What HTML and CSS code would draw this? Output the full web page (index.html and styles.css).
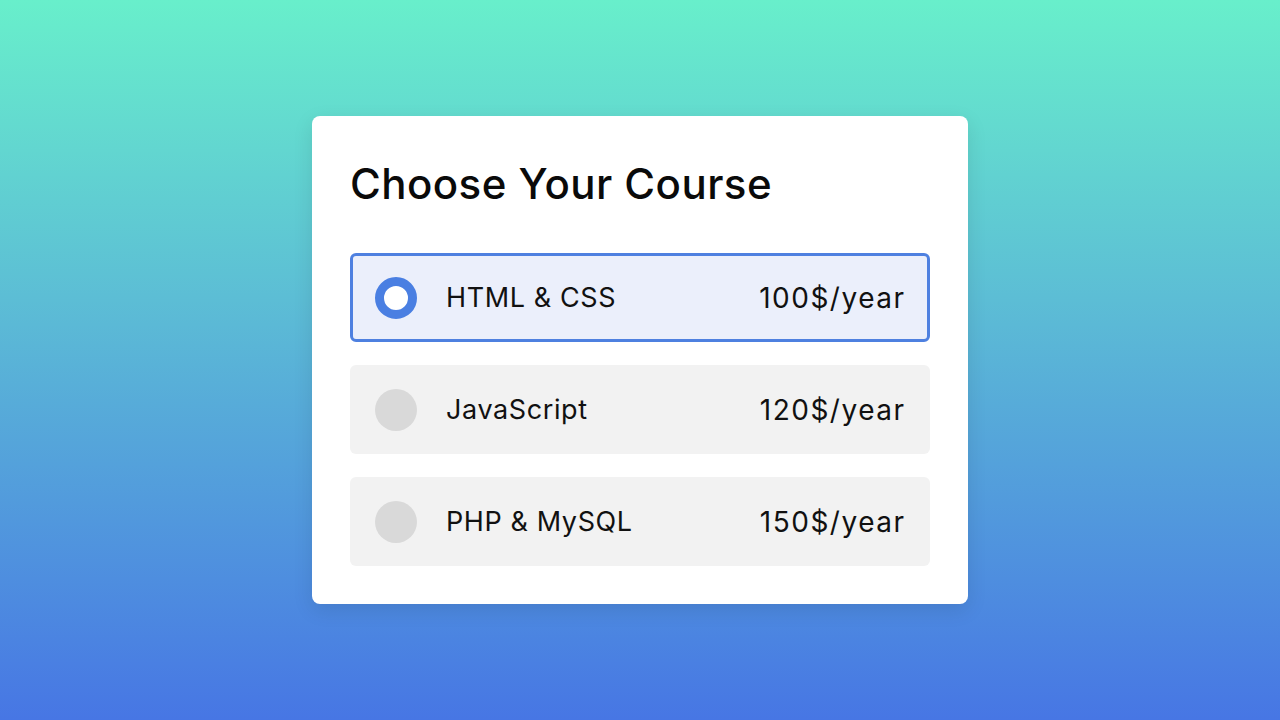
FILE: index.html
```html
<!DOCTYPE html>
<html>
<head>
<meta charset="utf-8">
<link rel="stylesheet" href="styles.css">
</head>
<body>
<div class="card">
  <h1 class="title">Choose Your Course</h1>
  <div class="options">
    <label class="option selected">
      <span class="radio"></span>
      <span class="name">HTML &amp; CSS</span>
      <span class="price">100$/year</span>
    </label>
    <label class="option">
      <span class="radio"></span>
      <span class="name">JavaScript</span>
      <span class="price">120$/year</span>
    </label>
    <label class="option">
      <span class="radio"></span>
      <span class="name">PHP &amp; MySQL</span>
      <span class="price">150$/year</span>
    </label>
  </div>
</div>
</body>
</html>
```
FILE: styles.css
```css
html, body {
  margin: 0;
  padding: 0;
}
body {
  width: 1280px;
  height: 720px;
  display: flex;
  align-items: center;
  justify-content: center;
  background: linear-gradient(to bottom, #68efcb 0%, #5bb9d6 45%, #4776e4 100%);
  font-family: "Inter", "Noto Sans", sans-serif;
  color: #111;
}
.card {
  width: 656px;
  height: 488px;
  box-sizing: border-box;
  padding: 38px;
  background: #fff;
  border-radius: 8px;
  box-shadow: 0 6px 20px rgba(0, 0, 0, 0.10);
}
.title {
  margin: 0 0 39px 0;
  height: 60px;
  line-height: 60px;
  font-size: 42px;
  font-weight: 500;
  letter-spacing: 0.45px;
  color: #0a0a0a;
}
.options {
  display: flex;
  flex-direction: column;
  gap: 23px;
}
.option {
  height: 89px;
  box-sizing: border-box;
  display: flex;
  align-items: center;
  padding: 0 23px 0 22px;
  background: #f2f2f2;
  border: 3px solid transparent;
  border-radius: 6px;
  font-size: 27px;
  color: #111;
}
.option.selected {
  background: #ebeffb;
  border-color: #4e80e0;
}
.radio {
  width: 42px;
  height: 42px;
  box-sizing: border-box;
  border-radius: 50%;
  background: #d9d9d9;
  flex: none;
}
.option.selected .radio {
  background: #fff;
  border: 9px solid #4a7fe2;
}
.name {
  margin-left: 29px;
  flex: 1;
  letter-spacing: 0.6px;
}
.price {
  text-align: right;
  font-size: 28px;
  letter-spacing: 1.5px;
  margin-right: -1.5px;
}
```
